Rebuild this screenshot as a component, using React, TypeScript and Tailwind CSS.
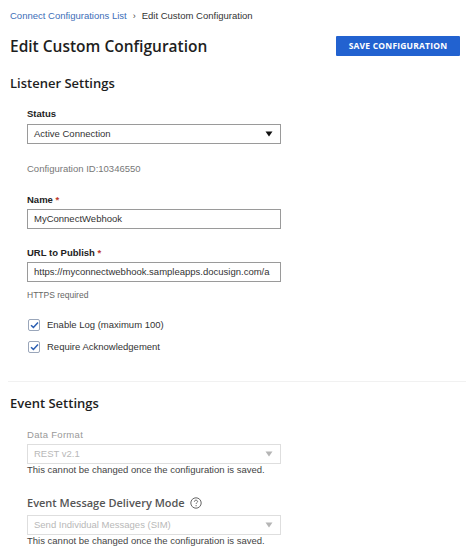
import React from "react";

const body = "font-['Liberation_Sans',Arial,sans-serif]";
const head = "font-['Open_Sans',sans-serif]";

function Caret({ muted }: { muted?: boolean }) {
  return (
    <svg width="8" height="6" viewBox="0 0 8 6" className="shrink-0">
      <path d="M0.5 0.5 L7.5 0.5 L4 5.5 Z" fill={muted ? "#b5b5b5" : "#111"} />
    </svg>
  );
}

function SelectBox({ value, disabled }: { value: string; disabled?: boolean }) {
  return (
    <div
      className={`flex h-[20px] w-[254px] items-center justify-between border pl-[6px] pr-[7px] text-[9.5px] ${
        disabled ? "border-[#dedede] text-[#b8b8b8]" : "border-[#9a9a9a] text-[#333]"
      }`}
    >
      <span>{value}</span>
      <Caret muted={disabled} />
    </div>
  );
}

function TextBox({ value }: { value: string }) {
  return (
    <div className="flex h-[20px] w-[254px] items-center whitespace-nowrap border border-[#9a9a9a] pl-[6px] text-[9.5px] text-[#333]">
      {value}
    </div>
  );
}

function Check({ label, className }: { label: string; className?: string }) {
  return (
    <div className={`flex h-[14px] items-center gap-[7px] pl-[28px] ${className ?? ""}`}>
      <span className="flex h-[12px] w-[12px] items-center justify-center rounded-[2px] border border-[#9aa6ba] bg-white">
        <svg width="9" height="8" viewBox="0 0 9 8">
          <path d="M1 4.2 L3.4 6.4 L8 1.4" fill="none" stroke="#2c5fb3" strokeWidth="1.5" />
        </svg>
      </span>
      <span className="text-[9.5px] text-[#333]">{label}</span>
    </div>
  );
}

export default function App() {
  return (
    <div className={`h-[557px] w-[474px] overflow-hidden bg-white ${body}`}>
      <div className="mt-[9px] flex h-[14px] items-center gap-[6px] pl-[10px] text-[9.5px] leading-[14px]">
        <span className="text-[#3d6eb8]">Connect Configurations List</span>
        <span className="text-[9px] text-[#444]">›</span>
        <span className="text-[#333]">Edit Custom Configuration</span>
      </div>

      <div className="mt-[12px] flex h-[22px] items-center justify-between pl-[10px] pr-[14px]">
        <h1 className={`${head} text-[15.5px] font-semibold leading-[22px] text-[#1e1e1e]`}>Edit Custom Configuration</h1>
        <button className={`${head} h-[20px] w-[124px] rounded-[1px] bg-[#2262d0] text-[8.5px] font-bold tracking-[0.2px] text-white`}>
          SAVE CONFIGURATION
        </button>
      </div>

      <h2 className={`${head} mt-[17px] pl-[10px] text-[13px] font-semibold leading-[18px] text-[#1e1e1e]`}>Listener Settings</h2>

      <div className="pl-[27px]">
        <div className="mt-[15px] text-[9.5px] font-bold leading-[14px] text-[#222]">Status</div>
        <div className="mt-[3px]">
          <SelectBox value="Active Connection" />
        </div>

        <div className="mt-[18px] text-[9.5px] leading-[14px] text-[#777]">Configuration ID:10346550</div>

        <div className="mt-[17px] text-[9.5px] font-bold leading-[14px] text-[#222]">
          Name <span className="text-[#c0392b]">*</span>
        </div>
        <div className="mt-[2px]">
          <TextBox value="MyConnectWebhook" />
        </div>

        <div className="mt-[17px] text-[9.5px] font-bold leading-[14px] text-[#222]">
          URL to Publish <span className="text-[#c0392b]">*</span>
        </div>
        <div className="mt-[2px]">
          <TextBox value="https://myconnectwebhook.sampleapps.docusign.com/a" />
        </div>
        <div className="mt-[7px] text-[8.5px] leading-[12px] text-[#666]">HTTPS required</div>
      </div>

      <Check label="Enable Log (maximum 100)" className="mt-[17px]" />
      <Check label="Require Acknowledgement" className="mt-[8px]" />

      <div className="mx-[8px] mt-[27px] h-px bg-[#f1f1f1]" />

      <h2 className={`${head} mt-[12px] pl-[10px] text-[13px] font-semibold leading-[18px] text-[#1e1e1e]`}>Event Settings</h2>

      <div className="pl-[27px]">
        <div className="mt-[16px] text-[9.5px] tracking-[0.3px] leading-[14px] text-[#999]">Data Format</div>
        <div className="mt-[2px]">
          <SelectBox value="REST v2.1" disabled />
        </div>
        <div className="text-[9.5px] leading-[12px] text-[#444]">This cannot be changed once the configuration is saved.</div>

        <div className={`${head} mt-[19px] flex h-[16px] items-center gap-[5px] text-[11px] font-semibold leading-[16px] text-[#555]`}>
          <span>Event Message Delivery Mode</span>
          <svg width="12" height="12" viewBox="0 0 12 12">
            <circle cx="6" cy="6" r="5.2" fill="none" stroke="#666" strokeWidth="1" />
            <path d="M4.4 4.7 C4.4 3.7 5.1 3.2 6 3.2 C6.9 3.2 7.6 3.8 7.6 4.6 C7.6 5.6 6.1 5.7 6.1 6.9" fill="none" stroke="#666" strokeWidth="1" />
            <circle cx="6.1" cy="8.7" r="0.6" fill="#666" />
          </svg>
        </div>
        <div className="mt-[4px]">
          <SelectBox value="Send Individual Messages (SIM)" disabled />
        </div>
        <div className="text-[9.5px] leading-[12px] text-[#444]">This cannot be changed once the configuration is saved.</div>
      </div>
    </div>
  );
}
